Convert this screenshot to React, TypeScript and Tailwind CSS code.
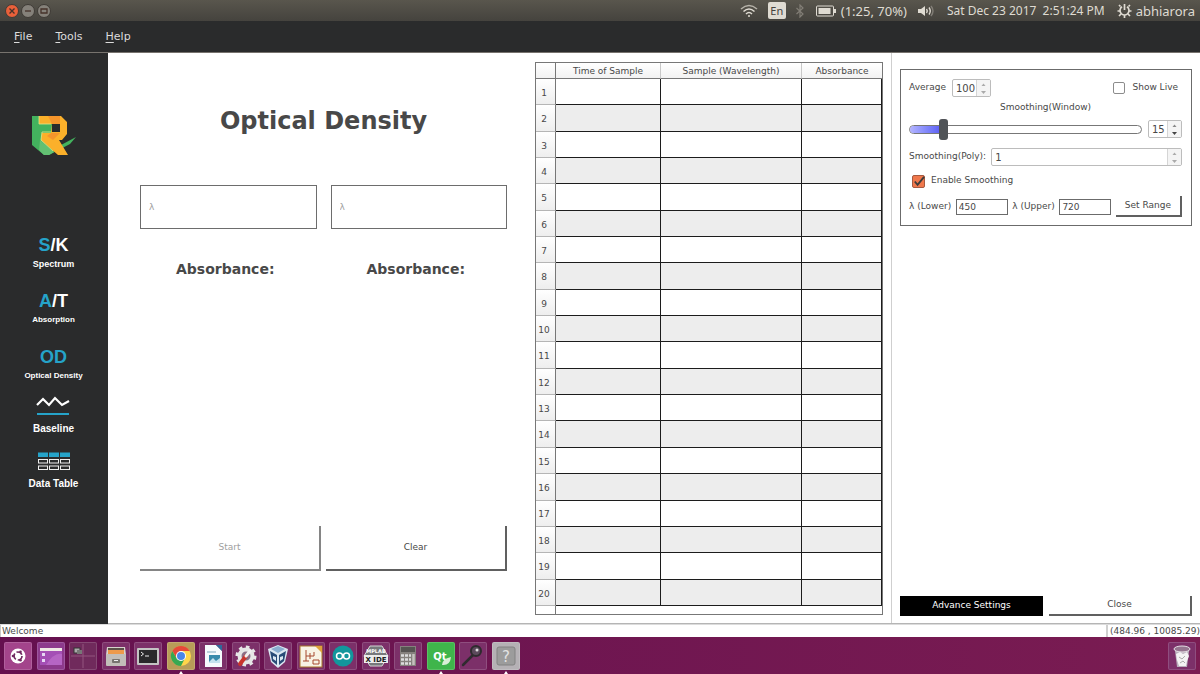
import { useState } from 'react';
import type { ReactNode } from 'react';

const sidebarItems = [
    { top: ['S', '/K'], label: 'Spectrum', size: 'text-[9px]' },
    { top: ['A', '/T'], label: 'Absorption', size: 'text-[8px]' },
    { top: ['OD', ''], label: 'Optical Density', size: 'text-[8px]' },
];

const rows = Array.from({ length: 20 }, (_, i) => i + 1);

const Logo = () => (
    <svg width="46" height="42" viewBox="0 0 46 42" aria-label="Logo">
        <path d="M1 1 H9 V9 H21 V18 L30 30 L45 22 L39 29 L18 40 H13 L1 30 Z" fill="#43b25e" />
        <path d="M9 25 L23 37 L18 40 H13 L8 35 Z" fill="#63c072" />
        <path d="M8 1 H30 L36 7 V19 L31 25 H28 L37 40 H27 L10 25 L11 18 H20 L21 9 H8 Z" fill="#fbb02a" />
        <path d="M17 1 H29 V9 H21 Z M20 18 H29 L22 25 L16 21 Z" fill="#f28a2c" opacity="0.700" />
        <path d="M21 9 h8 v8 h-8 z" fill="#2a2b2c" />
        <path d="M8 1 V9 H20 M20 17 H11 L10 25 L22 36" fill="none" stroke="#e3e58c" strokeWidth="0.800" />
    </svg>
);

const WindowButton = ({ label, close, children }: { label: string; close?: boolean; children: ReactNode }) => (
    <button aria-label={label} className={`h-[14px] w-[14px] rounded-full border border-[#3f3b36] ${close ? 'bg-[#e9603a]' : 'bg-[#85817a]'}`}>
        <svg viewBox="0 0 12 12" className="h-3 w-3" fill="none" stroke="#45322a" strokeWidth="1.3">{children}</svg>
    </button>
);

const TopBar = () => (
    <header className="flex h-[21px] shrink-0 items-center justify-between bg-linear-to-b from-[#59564d] to-[#45433e] pl-[5px] pr-[5px] text-[#dfdbd2]">
        <div className="flex items-center gap-[2px]">
            <WindowButton label="Close window" close><path d="M3.5 3.5 l5 5 M8.5 3.5 l-5 5" /></WindowButton>
            <WindowButton label="Minimize"><path d="M3 6 h6" /></WindowButton>
            <WindowButton label="Maximize"><path d="M3 4 h6 v4 h-6 z" /></WindowButton>
        </div>
        <div className="flex items-center font-['Noto_Sans',sans-serif] text-[12px] leading-[20px]">
            <svg width="18" height="14" viewBox="0 0 18 14" fill="none" stroke="currentColor" strokeWidth="1.5">
                <path d="M1 5 Q9 -2 17 5" opacity="0.7" />
                <path d="M3.5 7.5 Q9 2.5 14.5 7.5" />
                <path d="M6 10 Q9 7 12 10" />
                <circle cx="9" cy="12" r="1" fill="currentColor" stroke="none" />
            </svg>
            <span className="ml-[10px] flex h-[17px] w-[18px] items-center justify-center rounded-xs bg-[#dfdbd2] text-[11px] text-[#45433e]">En</span>
            <svg className="ml-[9px]" width="10" height="14" viewBox="0 0 10 14" fill="none" stroke="#827e76" strokeWidth="1.2">
                <path d="M1.5 4 L8 10 L5 13 V1 L8 4 L1.5 10" />
            </svg>
            <svg className="ml-[11px]" width="21" height="12" viewBox="0 0 21 12">
                <rect x="0.5" y="1" width="17" height="10" rx="1" fill="none" stroke="currentColor" />
                <rect x="2.5" y="3" width="12" height="6" fill="currentColor" />
                <path d="M18 4 h2 v4 h-2 z" fill="currentColor" />
            </svg>
            <span className="ml-1 text-[13px]">(1:25, 70%)</span>
            <svg className="ml-[10px]" width="18" height="14" viewBox="0 0 18 14" fill="none" stroke="currentColor" strokeWidth="1.4">
                <path d="M1 5 h3 l4 -3 v10 l-4 -3 h-3 z" fill="currentColor" stroke="none" />
                <path d="M9.5 5 Q11 7 9.5 9 M12 3.5 Q14.500 7 12 10.5" />
                <path d="M14 2 Q18 7 14 12" opacity="0.35" />
            </svg>
            <span className="ml-3 whitespace-pre">Sat Dec 23 2017  2:51:24 PM</span>
            <svg className="ml-3" width="15" height="15" viewBox="0 0 15 15" fill="none" stroke="currentColor">
                <path d="M5 3.800 A4.500 4.500 0 1 0 10 3.800" strokeWidth="1.7" />
                <path d="M7.5 1 v6" strokeWidth="1.7" />
                <path d="M3.500 3.500 l-1.500 -1.500 M11.500 3.500 l1.500 -1.500 M3 8 h-2.500 M12 8 h2.500 M4 11 l-2 2 M11 11 l2 2 M7.500 12.500 v2.500" strokeWidth="1.700" />
            </svg>
            <span className="ml-1 text-[13px]">abhiarora</span>
        </div>
    </header>
);

const MenuBar = () => (
    <nav className="flex h-8 shrink-0 items-center gap-[23px] border-b border-[#77736e] bg-[#2a2b2c] pl-[14px] pt-px text-[11px] text-[#dcdcdc]">
        {['File', 'Tools', 'Help'].map((item) => (
            <button key={item}>
                <span className="underline underline-offset-2">{item[0]}</span>{item.slice(1)}
            </button>
        ))}
    </nav>
);

const Sidebar = () => (
    <aside className="flex w-[108px] shrink-0 flex-col items-center bg-[#2a2b2c] pr-px pt-[62px] font-['Liberation_Sans',Arial,sans-serif] font-bold text-white">
        <Logo />
        <nav className="mt-[78px] flex flex-col items-center">
            {sidebarItems.map((item) => (
                <button key={item.label} className="flex h-14 flex-col items-center">
                    <span className="text-[18px] leading-[20px]"><span className="text-[#25a3c9]">{item.top[0]}</span>{item.top[1]}</span>
                    <span className={`mt-[3px] leading-[12px] ${item.size}`}>{item.label}</span>
                </button>
            ))}
            <button className="-mt-[7px] flex h-14 flex-col items-center text-[10px] leading-[12px]">
                <svg width="34" height="20" viewBox="0 0 34 20" fill="none">
                    <path d="M1 9 L7 3 L13 9 L19 2 L26 9 L33 5" stroke="#fff" strokeWidth="2.200" />
                    <path d="M1 18 H33" stroke="#25a3c9" strokeWidth="2" />
                </svg>
                <span className="mt-[7px]">Baseline</span>
            </button>
            <button className="flex flex-col items-center text-[10px] leading-[12px]">
                <svg width="34" height="19" viewBox="0 0 34 19" fill="none">
                    {[1, 12, 23].map((x) => (
                        <g key={x}>
                            <rect x={x} y="0.500" width="10" height="4.500" fill="#25a3c9" />
                            <rect x={x + 0.5} y="7.500" width="9" height="3.500" stroke="#eee" />
                            <rect x={x + 0.5} y="14" width="9" height="3.500" stroke="#eee" />
                        </g>
                    ))}
                </svg>
                <span className="mt-[7px]">Data Table</span>
            </button>
        </nav>
    </aside>
);

const DensityForm = () => (
    <section className="flex min-w-0 flex-1 flex-col pb-[52px] pl-8 pr-7 pt-[52px]">
        <h1 className="text-center text-[24px] font-bold leading-[32px]">Optical Density</h1>
        <div className="mt-12 grid grid-cols-2 gap-[14px]">
            {['left', 'right'].map((side) => (
                <div key={side}>
                    <input aria-label={`${side} wavelength`} placeholder="λ" className="h-11 w-full border border-[#6d6d6d] px-2 text-[9px] placeholder:text-[#a0a0a0]" />
                    <p className="mt-[30px] pr-[6px] text-center text-[14px] font-bold leading-[20px]">Absorbance:</p>
                </div>
            ))}
        </div>
        <div className="mt-auto grid grid-cols-2 gap-[5px]">
            <button disabled className="h-[45px] border-b-2 border-r-2 border-[#858585] text-[#a0a0a0]">Start</button>
            <button className="h-[45px] border-b-2 border-r-2 border-[#606060]">Clear</button>
        </div>
    </section>
);

const SampleTable = () => (
    <section className="flex w-[357px] shrink-0 flex-col border-r border-[#cfcfcf] pb-2 pr-2 pt-[9px]">
        <table className="w-full flex-1 table-fixed border-separate border-spacing-0 border border-[#777] text-center">
            <colgroup>
                <col className="w-5" />
                <col className="w-[105px]" />
                <col className="w-[141px]" />
                <col />
            </colgroup>
            <thead>
                <tr className="h-4 bg-linear-to-b from-white to-[#f1f1f1] leading-[14px]">
                    <th aria-label="Row" className="border-b border-r border-[#777] p-0" />
                    <th className="border-b border-r border-b-[#777] border-r-[#c8c8c8] p-0 font-normal">Time of Sample</th>
                    <th className="border-b border-r border-b-[#777] border-r-[#c8c8c8] p-0 font-normal">Sample (Wavelength)</th>
                    <th className="border-b border-[#777] p-0 font-normal">Absorbance</th>
                </tr>
            </thead>
            <tbody>
                {rows.map((n) => (
                    <tr key={n} className="even:bg-[#ededed]">
                        <th className="border-b border-r border-b-[#b5b5b5] border-r-[#777] bg-linear-to-b from-white to-[#eeeeee] p-0 pr-[3px] pt-1 font-normal">{n}</th>
                        <td className="border-b border-r border-[#1c1c1c] p-0" />
                        <td className="border-b border-r border-[#1c1c1c] p-0" />
                        <td className="border-b border-r border-[#1c1c1c] p-0" />
                    </tr>
                ))}
            </tbody>
            <tfoot>
                <tr className="h-2">
                    <td className="border-r border-[#777] p-0" />
                    <td colSpan={3} className="p-0" />
                </tr>
            </tfoot>
        </table>
    </section>
);

type SpinProps = { id: string; label?: string; value: number; onChange: (v: number) => void; className: string; muted?: boolean };

const SpinBox = ({ id, label, value, onChange, className, muted }: SpinProps) => (
    <div className={`flex h-[18px] overflow-hidden rounded-xs border border-[#bcbcbc] bg-white ${className}`}>
        <input
            id={id}
            aria-label={label}
            inputMode="numeric"
            value={value}
            onChange={(e) => onChange(Number(e.target.value) || 0)}
            className="w-0 min-w-0 flex-1 pl-[3px] text-[10px] outline-none"
        />
        <div className="flex w-[14px] flex-col border-l border-[#d5d5d5] bg-[#f4f4f4]">
            <button aria-label="Increase" onClick={() => onChange(value + 1)} className="flex flex-1 items-center justify-center">
                <svg width="5" height="3" viewBox="0 0 5 3"><path d="M0.500 3 L2.500 0.500 L4.500 3 Z" fill={muted ? '#aaa' : '#888'} /></svg>
            </button>
            <button aria-label="Decrease" onClick={() => onChange(value - 1)} className="flex flex-1 items-center justify-center">
                <svg width="5" height="3" viewBox="0 0 5 3"><path d="M0 0 H5 L2.500 3 Z" fill={muted ? '#aaa' : '#444'} /></svg>
            </button>
        </div>
    </div>
);

const SettingsPanel = () => {
    const [average, setAverage] = useState(100);
    const [smoothing, setSmoothing] = useState(15);
    const [poly, setPoly] = useState(1);
    const min = 1;
    const max = 105;
    const fill = ((smoothing - min) / (max - min)) * 100;

    return (
        <section className="flex w-[308px] shrink-0 flex-col pb-[7px] pl-2 pr-2 pt-4">
            <div className="border border-[#6b6b6b] pb-2 pl-2 pr-[9px] pt-[9px]">
                <div className="flex h-[18px] items-center">
                    <label htmlFor="average">Average</label>
                    <SpinBox id="average" value={average} onChange={setAverage} className="ml-[6px] w-[39px]" muted />
                    <label className="ml-auto flex items-center gap-[7px] pr-1">
                        <input type="checkbox" className="h-3 w-3 appearance-none rounded-xs border border-[#8c8c8c] checked:bg-[#e9754b]" />
                        Show Live
                    </label>
                </div>
                <label htmlFor="window" className="mt-[3px] block text-center leading-[14px]">Smoothing(Window)</label>
                <div className="mt-1 flex h-[22px] items-center gap-[6px]">
                    <div className="relative flex h-[22px] min-w-0 flex-1 items-center">
                        <div className="h-[9px] w-full overflow-hidden rounded-full border border-[#777] bg-white">
                            <div className="h-full bg-linear-to-r from-[#b4b4ff] to-[#5c5cf4]" style={{ width: `${fill}%` }} />
                        </div>
                        <input
                            id="window"
                            type="range"
                            min={min}
                            max={max}
                            value={smoothing}
                            onChange={(e) => setSmoothing(Number(e.target.value))}
                            className="absolute inset-0 w-full appearance-none bg-transparent [&::-webkit-slider-thumb]:h-[21px] [&::-webkit-slider-thumb]:w-[9px] [&::-webkit-slider-thumb]:appearance-none [&::-webkit-slider-thumb]:rounded-[3px] [&::-webkit-slider-thumb]:bg-[#505357]"
                        />
                    </div>
                    <SpinBox id="window-value" label="Smoothing window size" value={smoothing} onChange={setSmoothing} className="w-[34px]" />
                </div>
                <div className="mt-2 flex h-[18px] items-center gap-[5px]">
                    <label htmlFor="poly">Smoothing(Poly):</label>
                    <SpinBox id="poly" value={poly} onChange={setPoly} className="min-w-0 flex-1" muted />
                </div>
                <label className="mt-2 flex h-[14px] items-center gap-[6px] pl-[3px]">
                    <span className="relative h-[13px] w-[13px]">
                        <input type="checkbox" defaultChecked className="peer block h-[13px] w-[13px] appearance-none rounded-xs border border-[#a65a40] checked:bg-[#f0784c]" />
                        <svg viewBox="0 0 14 14" className="pointer-events-none absolute inset-0 hidden peer-checked:block" fill="none" stroke="#3c3c3c" strokeWidth="2">
                            <path d="M3 7 L6 10.500 L13 2" />
                        </svg>
                    </span>
                    Enable Smoothing
                </label>
                <div className="mt-2 flex h-[21px] items-center justify-between">
                    <label htmlFor="lower">λ (Lower)</label>
                    <input id="lower" defaultValue="450" className="h-4 w-[52px] border border-[#6b6b6b] px-[2px]" />
                    <label htmlFor="upper">λ (Upper)</label>
                    <input id="upper" defaultValue="720" className="h-4 w-[52px] border border-[#6b6b6b] px-[2px]" />
                    <button className="h-[21px] w-[66px] border-b-2 border-r-2 border-[#606060]">Set Range</button>
                </div>
            </div>
            <div className="mt-auto grid grid-cols-2 gap-[6px]">
                <button className="h-5 bg-black text-white">Advance Settings</button>
                <button className="h-5 border-b-2 border-r-2 border-[#606060]">Close</button>
            </div>
        </section>
    );
};

const Gear = () => (
    <g>
        <circle cx="14" cy="14" r="6.500" fill="#8b6f86" stroke="#e6e6e6" strokeWidth="4" />
        <circle cx="14" cy="14" r="9" fill="none" stroke="#e6e6e6" strokeWidth="3" strokeDasharray="3.500 3.500" />
        <path d="M8 22 L14 14" stroke="#c9342c" strokeWidth="4" strokeLinecap="round" />
        <path d="M14 14 L18 9" stroke="#f0f0f0" strokeWidth="3" strokeLinecap="round" />
    </g>
);

// launcher entries, each drawn on a 28x28 tile
const launcher: { name: string; tile?: string; running?: boolean; art: ReactNode }[] = [
    {
        name: 'Dash', tile: 'bg-[#a3448b]',
        art: <g><circle cx="14" cy="14" r="7.500" fill="#fff" /><circle cx="14" cy="14" r="4" fill="none" stroke="#6f2a60" strokeWidth="1.700" strokeDasharray="6.400 2" /><circle cx="9" cy="14" r="1.300" fill="#6f2a60" /><circle cx="16.500" cy="9.700" r="1.300" fill="#6f2a60" /><circle cx="16.500" cy="18.300" r="1.300" fill="#6f2a60" /></g>,
    },
    {
        name: 'Desktop', tile: 'bg-[#8d3a8d]',
        art: <g><rect x="3" y="6" width="22" height="17" fill="#a44fb5" /><path d="M3 6 h22 v3 h-22 z" fill="#efe9e6" /><path d="M5 11 h3 v3 h-3 z M5 17 h3 v3 h-3 z" fill="#e7d8f5" /><path d="M9 23 Q17 10 25 12 V23 Z" fill="#c374cf" opacity="0.600" /></g>,
    },
    {
        name: 'Workspaces', tile: 'bg-[#702a5c]',
        art: <g><path d="M14 2 v24 M2 14 h24" stroke="#93557f" /><rect x="5" y="6" width="6" height="5" fill="#aaa" stroke="#333" /><rect x="8" y="8" width="5" height="4" fill="#777" /></g>,
    },
    {
        name: 'Files',
        art: <g><path d="M5 5 h18 l1 8 h-20 z" fill="#d7d3ce" /><path d="M6 7 h16 v6 h-16 z" fill="#ed9a4b" /><path d="M6 6 h16 v2 h-16 z" fill="#5c5149" /><rect x="4" y="12" width="20" height="12" rx="1" fill="#c2beb9" /><rect x="10" y="17" width="8" height="4" rx="1" fill="#77736f" /><path d="M12 18.500 h4" stroke="#eee" /></g>,
    },
    {
        name: 'Terminal',
        art: <g><rect x="3" y="6" width="22" height="17" rx="1" fill="#c4c4c4" /><rect x="5" y="8" width="18" height="13" fill="#29292b" /><path d="M7 10 l2.500 2 l-2.500 2 M11 14 h4" fill="none" stroke="#eee" /></g>,
    },
    {
        name: 'Chrome', tile: 'bg-[#b89c58]', running: true,
        art: <g><circle cx="14" cy="14" r="10" fill="#ffd54b" /><path d="M5.300 9 A10 10 0 0 1 22.700 9 H14 L10 17 Z" fill="#e5493a" /><path d="M5.300 9 A10 10 0 0 0 14 24 L18 16 L10 17 Z" fill="#36a852" /><circle cx="14" cy="14" r="5" fill="#fff" /><circle cx="14" cy="14" r="4" fill="#4a86e8" /></g>,
    },
    {
        name: 'Writer',
        art: <g><path d="M6 3 h11 l6 6 v16 h-17 z" fill="#f5fafc" /><path d="M17 3 h6 v6 z" fill="#2e6a9b" /><path d="M8 10 h9" stroke="#7fa8bd" /><rect x="10" y="13" width="11" height="8" fill="#388bac" /><path d="M10 20 l4 -4 l3 3 l4 -3 v5 h-11 z" fill="#c4e2ee" /></g>,
    },
    { name: 'Settings', art: <Gear /> },
    {
        name: 'VirtualBox',
        art: <g><path d="M14 3 L24 7 L21 20 L14 26 L7 20 L4 7 Z" fill="#dbe7f1" /><path d="M14 4 L21 7 L14 11 L7 7 Z" fill="#8aaed0" /><path d="M6 9 L13 13 V23 L8 19 Z M22 9 L15 13 V23 L20 19 Z" fill="#294b77" /><path d="M9 14 l3 1 v4 l-3 -2 z M19 14 l-3 1 v4 l3 -2 z" fill="#dbe7f1" /></g>,
    },
    {
        name: 'Schematics',
        art: <g><rect x="3" y="4" width="22" height="21" fill="#f8f3e5" stroke="#a8772d" /><path d="M18 4 h7 v7 z" fill="#e0a33a" /><path d="M9 8 v11 M9 14 h8 M17 10 v4 M6 19 h6 M16 18 h6 v4 h-6 z M13 11 v6" fill="none" stroke="#a6482f" strokeWidth="1" /></g>,
    },
    {
        name: 'Arduino',
        art: <g><circle cx="14" cy="14" r="10.500" fill="#12979c" /><circle cx="10.500" cy="14" r="3" fill="none" stroke="#fff" strokeWidth="1.500" /><circle cx="17.500" cy="14" r="3" fill="none" stroke="#fff" strokeWidth="1.500" /></g>,
    },
    {
        name: 'MPLAB X IDE',
        art: <g><path d="M8 4 h12 l6 10 l-6 10 h-12 l-6 -10 z" fill="#77797c" stroke="#d5d5d5" /><rect x="2" y="13" width="24" height="8" fill="#ececec" /><text x="14" y="11" textAnchor="middle" fontSize="5" fontWeight="bold" fill="#fff">MPLAB</text><text x="14" y="19.500" textAnchor="middle" fontSize="7" fontWeight="bold" fill="#222">X IDE</text></g>,
    },
    {
        name: 'Calculator',
        art: <g><rect x="6" y="4" width="16" height="20" fill="#85817d" /><rect x="7" y="5" width="14" height="5" fill="#565452" /><path d="M7 13.500 h10 M7 17.500 h10 M7 21.500 h10" stroke="#ddd" strokeWidth="2.500" strokeDasharray="3 1" /><path d="M19.500 12 v11" stroke="#c5c2be" strokeWidth="2.500" /></g>,
    },
    {
        name: 'Qt Creator', tile: 'bg-[#3fb54b]', running: true,
        art: <g><text x="13" y="18" textAnchor="middle" fontSize="10" fontWeight="bold" fill="#fff">Qt</text><path d="M15 23 Q15 17 24 15 Q23 24 15 23 Z" fill="#d9efd5" /></g>,
    },
    {
        name: 'Magnifier',
        art: <g><path d="M4 23 L14 13" stroke="#302b30" strokeWidth="2.500" strokeLinecap="round" /><circle cx="17" cy="9" r="5" fill="#5c4a5c" stroke="#2e2b2e" strokeWidth="2" /><circle cx="18" cy="8" r="1.500" fill="#ddd" /></g>,
    },
    {
        name: 'Unknown', tile: 'bg-[#b5b1b5]', running: true,
        art: <g><rect x="5" y="5" width="18" height="18" rx="2" fill="#9c9c9c" stroke="#828282" /><text x="14" y="19.500" textAnchor="middle" fontSize="15" fill="#e3e3e3">?</text></g>,
    },
];

const LauncherTile = ({ name, tile, running, art }: { name: string; tile?: string; running?: boolean; art: ReactNode }) => (
    <button aria-label={name} className={`relative h-7 w-7 rounded-xs border border-white/15 ${tile ?? 'bg-[#7c3069]'}`}>
        <svg viewBox="1 1 26 26" className="h-full w-full" fill="none">{art}</svg>
        {running && <span className="absolute -bottom-[5px] left-[11px] border-x-2 border-b-3 border-x-transparent border-b-white" />}
    </button>
);

const Launcher = () => (
    <footer className="flex h-[37px] shrink-0 items-center justify-between bg-linear-to-r from-[#65104f] to-[#7a1c52] pl-[2px] pr-1">
        <div className="grid w-[520px] grid-cols-16 justify-items-center">
            {launcher.map((app) => <LauncherTile key={app.name} {...app} />)}
        </div>
        <LauncherTile
            name="Trash"
            art={<g><path d="M7 9 L9 25 H19 L21 9 Z" fill="#b9aebb" /><ellipse cx="14" cy="7" rx="8" ry="3" fill="#95758f" stroke="#e5e0e5" /><path d="M8 12 l4 -2 l3 2 l4 -2 l2 4 l-2 5 l-1 5 h-7 l-2 -6 z" fill="#f3f3f3" /><path d="M11 15 l3 2 l3 -3 M12 21 l3 -2 l2 2" stroke="#aaa" /></g>}
        />
    </footer>
);

const App = () => (
    <div className="flex min-h-screen flex-col bg-white font-['DejaVu_Sans',sans-serif] text-[9px] text-[#484848]">
        <TopBar />
        <MenuBar />
        <main className="flex flex-1">
            <Sidebar />
            <div className="flex min-w-0 flex-1 border-b border-[#b5b5b5]">
                <DensityForm />
                <SampleTable />
                <SettingsPanel />
            </div>
        </main>
        <div className="flex h-[13px] shrink-0 items-center justify-between border-t border-[#dcdcdc] leading-[12px]">
            <span className="border-l border-[#c8c8c8] pl-px">Welcome</span>
            <span className="border-l-2 border-[#d0d0d0] pl-[2px]">(484.96 , 10085.29)</span>
        </div>
        <Launcher />
    </div>
);

export default App;
